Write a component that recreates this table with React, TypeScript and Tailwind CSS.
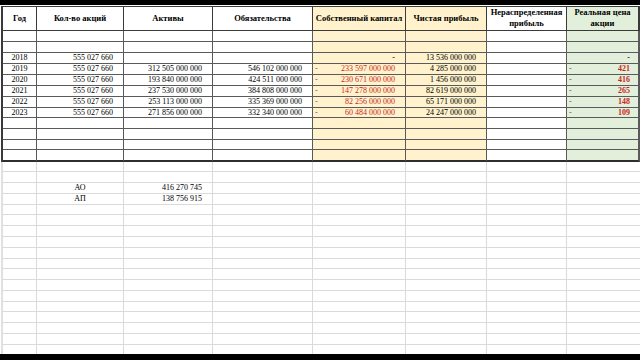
type Cell = { v?: string; neg?: boolean; dash?: boolean };

type Row = {
  year?: string;
  shares?: string;
  assets?: string;
  liab?: string;
  equity?: Cell;
  profit?: string;
  price?: Cell;
};

const rows: Row[] = [
  {},
  {},
  { year: "2018", shares: "555 027 660", equity: { dash: true }, profit: "13 536 000 000", price: { dash: true } },
  { year: "2019", shares: "555 027 660", assets: "312 505 000 000", liab: "546 102 000 000", equity: { v: "233 597 000 000", neg: true }, profit: "4 285 000 000", price: { v: "421", neg: true } },
  { year: "2020", shares: "555 027 660", assets: "193 840 000 000", liab: "424 511 000 000", equity: { v: "230 671 000 000", neg: true }, profit: "1 456 000 000", price: { v: "416", neg: true } },
  { year: "2021", shares: "555 027 660", assets: "237 530 000 000", liab: "384 808 000 000", equity: { v: "147 278 000 000", neg: true }, profit: "82 619 000 000", price: { v: "265", neg: true } },
  { year: "2022", shares: "555 027 660", assets: "253 113 000 000", liab: "335 369 000 000", equity: { v: "82 256 000 000", neg: true }, profit: "65 171 000 000", price: { v: "148", neg: true } },
  { year: "2023", shares: "555 027 660", assets: "271 856 000 000", liab: "332 340 000 000", equity: { v: "60 484 000 000", neg: true }, profit: "24 247 000 000", price: { v: "109", neg: true } },
  {},
  {},
  {},
  {},
];

// row heights incl. bottom border, so the lines fall on the sheet's grid
const rowH = [11, 11, 11, 11, 11, 11, 11, 10, 11, 11, 10, 12];
const belowH = [10, 11, 11, 11, 10, 11, 11, 11, 11, 10, 11, 11, 11, 10, 11, 11, 11, 10];

const cream = "bg-[#fff2cc]";
const green = "bg-[#e2efda]";

function Num({ v }: { v?: string }) {
  return <div className="flex items-center justify-end border-r border-b border-[#5a5a5a] pr-[10px]">{v}</div>;
}

function Acc({ c, bg, bold, pr }: { c?: Cell; bg: string; bold?: boolean; pr: string }) {
  if (!c) return <div className={`border-r border-b border-[#5a5a5a] ${bg}`} />;
  if (c.dash)
    return <div className={`flex items-center justify-end border-r border-b border-[#5a5a5a] ${pr} ${bg}`}>-</div>;
  return (
    <div className={`flex items-center justify-between border-r border-b border-[#5a5a5a] pl-[2px] ${pr} ${bg}`}>
      <span className="text-[#555]">-</span>
      <span className={`text-[#c8281e] ${bold ? "font-bold" : ""}`}>{c.v}</span>
    </div>
  );
}

export default function App() {
  return (
    <div className="flex h-[360px] w-[640px] flex-col overflow-hidden bg-white font-['Liberation_Serif',serif] text-[8px] leading-none text-black">
      <div className="h-[5px] shrink-0 bg-black" />
      <div className="h-[1px] shrink-0" />

      {/* bordered table */}
      <div className="ml-[1px] w-[639px] border-t border-l-2 border-[#3a3a3a]">
        <div className="grid h-[24px] grid-cols-[34px_87px_89px_100px_93px_81px_80px_73px] text-[8.5px] font-bold">
          <div className="flex items-center justify-center border-r border-b border-[#3a3a3a]">Год</div>
          <div className="flex items-center justify-center border-r border-b border-[#3a3a3a]">Кол-во акций</div>
          <div className="flex items-center justify-center border-r border-b border-[#3a3a3a]">Активы</div>
          <div className="flex items-center justify-center border-r border-b border-[#3a3a3a]">Обязательства</div>
          <div className={`flex items-center justify-center border-r border-b border-[#3a3a3a] ${cream}`}>Собственный капитал</div>
          <div className={`flex items-center justify-center border-r border-b border-[#3a3a3a] ${cream}`}>Чистая прибыль</div>
          <div className="flex flex-col items-center justify-center gap-[2px] border-r border-b border-[#3a3a3a] pb-[2px]">
            <span>Нераспределенная</span>
            <span>прибыль</span>
          </div>
          <div className={`flex flex-col items-center justify-center gap-[2px] border-r-2 border-b border-[#3a3a3a] pb-[2px] ${green}`}>
            <span>Реальная цена</span>
            <span>акции</span>
          </div>
        </div>

        {rows.map((r, i) => (
          <div
            key={i}
            style={{ height: rowH[i] }}
            className={`grid grid-cols-[34px_87px_89px_100px_93px_81px_80px_73px] [&>div:last-child]:border-r-2 ${i === rows.length - 1 ? "[&>div]:border-b-2 [&>div]:border-b-[#2e2e2e]" : ""}`}
          >
            <div className="flex items-center justify-center border-r border-b border-[#5a5a5a]">{r.year}</div>
            <Num v={r.shares} />
            <Num v={r.assets} />
            <Num v={r.liab} />
            <Acc c={r.equity} bg={cream} pr="pr-[10px]" />
            <div className={`flex items-center justify-end border-r border-b border-[#5a5a5a] pr-[10px] ${cream}`}>{r.profit}</div>
            <div className="border-r border-b border-[#5a5a5a]" />
            <Acc c={r.price} bg={green} bold pr="pr-[8px]" />
          </div>
        ))}
      </div>

      {/* plain sheet grid below */}
      <div className="ml-[1px] w-[639px] overflow-hidden border-l-2 border-[#e0e0e0]">
        {belowH.map((h, i) => (
          <div
            key={i}
            style={{ height: h }}
            className="grid grid-cols-[34px_87px_89px_100px_93px_81px_80px_73px] border-b border-[#dadada] [&>div]:border-r [&>div]:border-[#dadada]"
          >
            <div />
            <div className="flex items-center justify-center">{i === 2 ? "АО" : i === 3 ? "АП" : ""}</div>
            <div className="flex items-center justify-end pr-[10px]">{i === 2 ? "416 270 745" : i === 3 ? "138 756 915" : ""}</div>
            <div />
            <div />
            <div />
            <div />
            <div className="!border-r-0" />
          </div>
        ))}
      </div>

      <div className="mt-auto h-[6px] shrink-0 bg-black" />
    </div>
  );
}
